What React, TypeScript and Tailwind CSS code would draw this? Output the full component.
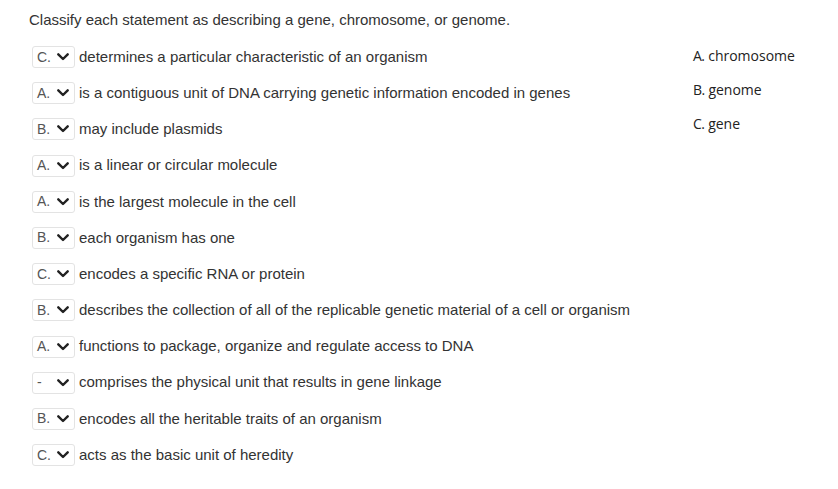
const rows = [
  { pick: "C.", text: "determines a particular characteristic of an organism" },
  { pick: "A.", text: "is a contiguous unit of DNA carrying genetic information encoded in genes" },
  { pick: "B.", text: "may include plasmids" },
  { pick: "A.", text: "is a linear or circular molecule" },
  { pick: "A.", text: "is the largest molecule in the cell" },
  { pick: "B.", text: "each organism has one" },
  { pick: "C.", text: "encodes a specific RNA or protein" },
  { pick: "B.", text: "describes the collection of all of the replicable genetic material of a cell or organism" },
  { pick: "A.", text: "functions to package, organize and regulate access to DNA" },
  { pick: "-", text: "comprises the physical unit that results in gene linkage" },
  { pick: "B.", text: "encodes all the heritable traits of an organism" },
  { pick: "C.", text: "acts as the basic unit of heredity" },
];

const options = [
  { key: "A.", label: "chromosome" },
  { key: "B.", label: "genome" },
  { key: "C.", label: "gene" },
];

function Chevron() {
  return (
    <svg width="12" height="8" viewBox="0 0 12 8" className="shrink-0">
      <polyline points="1.3,1.3 6,6 10.7,1.3" fill="none" stroke="#222" strokeWidth="2.4" strokeLinecap="round" strokeLinejoin="round" />
    </svg>
  );
}

export default function App() {
  return (
    <div className="min-h-screen w-[838px] h-[489px] bg-white text-[#333] font-['Liberation_Sans',Arial,sans-serif] overflow-hidden">
      <div className="flex pl-[29px] pt-[11px]">
        <div className="flex-1">
          <p className="text-[15px] leading-[18px]">
            Classify each statement as describing a gene, chromosome, or genome.
          </p>
          <div className="mt-[17px] flex flex-col gap-[14.2px]">
            {rows.map((r, i) => (
              <div key={i} className="flex items-center h-[22px]">
                <div className="ml-[3px] w-[43px] h-[22px] flex items-center rounded-[3px] border border-[#e3e3e3] bg-white pl-[4px] pr-[5px]">
                  <span className="text-[14px] text-[#555] flex-1">{r.pick}</span>
                  <Chevron />
                </div>
                <span className="ml-[4px] text-[15px]">{r.text}</span>
              </div>
            ))}
          </div>
        </div>
        <div className="w-[145px] pt-[36px] flex flex-col gap-[16px] font-['Open_Sans',sans-serif] text-[14px] leading-[18px] text-[#222]">
          {options.map((o) => (
            <div key={o.key}>
              <span className="tracking-[-0.5px]">{o.key}</span> {o.label}
            </div>
          ))}
        </div>
      </div>
    </div>
  );
}
